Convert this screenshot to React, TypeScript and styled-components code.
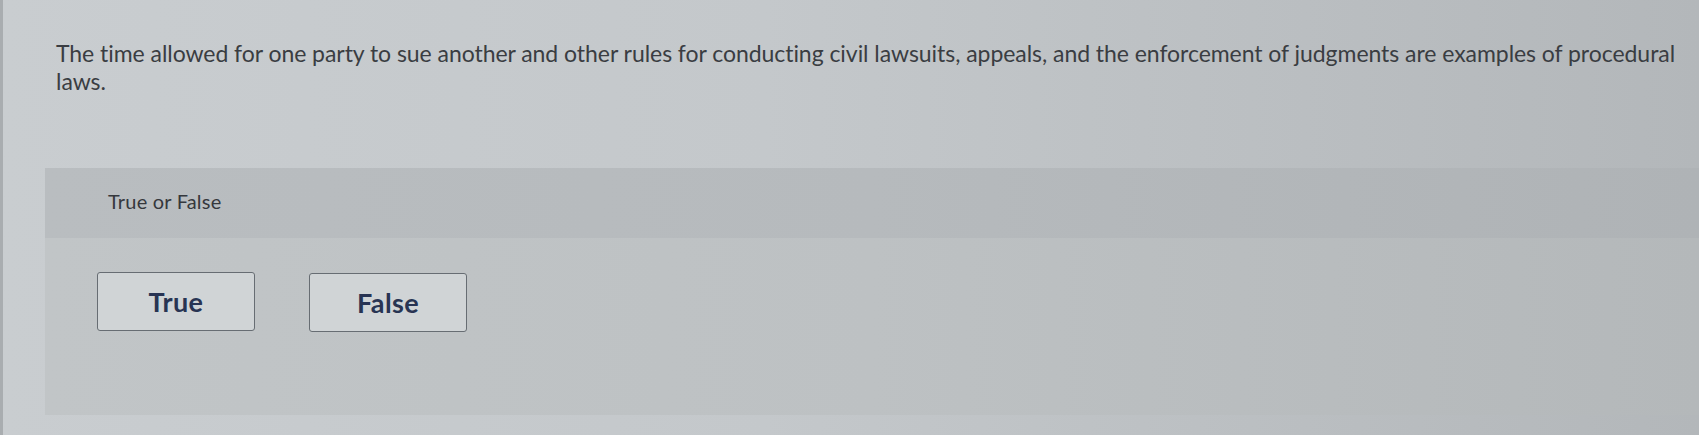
import React from "react";
import styled, { createGlobalStyle } from "styled-components";

const GlobalStyle = createGlobalStyle`
  html, body {
    margin: 0;
    padding: 0;
  }
  body {
    width: 1699px;
    height: 435px;
    overflow: hidden;
    background: linear-gradient(90deg, #c9cdd0 0%, #c4c8cb 45%, #b9bdc0 80%, #b3b7ba 100%);
    font-family: Lato, "Open Sans", sans-serif;
  }
`;

const Page = styled.main`
  position: relative;
  height: 435px;
  padding-top: 39px;
  box-sizing: border-box;
  border-left: 3px solid #a9adb0;
`;

const Prompt = styled.p`
  margin: 0 0 0 53px;
  width: 1640px;
  font-size: 23px;
  line-height: 28px;
  color: #3a3d42;
  letter-spacing: -0.05px;
`;

const Panel = styled.section`
  margin: 73px 0 0 42px;
  height: 247px;
  display: flex;
  flex-direction: column;
  background: linear-gradient(90deg, #c1c5c7 0%, #bdc1c3 50%, #b4b8ba 100%);
`;

const PanelHeader = styled.div`
  height: 70px;
  display: flex;
  align-items: center;
  padding-left: 63px;
  padding-bottom: 4px;
  box-sizing: border-box;
  background: linear-gradient(90deg, #b9bdc0 0%, #b6babd 50%, #afb3b6 100%);
`;

const Label = styled.span`
  font-size: 20px;
  letter-spacing: 0.2px;
  color: #35383d;
`;

const Choices = styled.div`
  display: flex;
  gap: 54px;
  padding: 34px 0 0 52px;
`;

const Choice = styled.button<{ $nudge?: number }>`
  width: 158px;
  height: 59px;
  margin-top: ${(p) => p.$nudge ?? 0}px;
  display: flex;
  align-items: center;
  justify-content: center;
  background: #d0d4d6;
  border: 1.5px solid #676d73;
  border-radius: 3px;
  font-family: Lato, "Open Sans", sans-serif;
  font-weight: 700;
  font-size: 27px;
  letter-spacing: 0.4px;
  color: #283453;
  cursor: pointer;
  padding: 0;
`;

export default function App() {
  return (
    <>
      <GlobalStyle />
      <Page>
        <Prompt>
          The time allowed for one party to sue another and other rules for conducting civil lawsuits,
          appeals, and the enforcement of judgments are examples of procedural laws.
        </Prompt>
        <Panel>
          <PanelHeader>
            <Label>True or False</Label>
          </PanelHeader>
          <Choices>
            <Choice type="button">True</Choice>
            <Choice type="button" $nudge={1}>False</Choice>
          </Choices>
        </Panel>
      </Page>
    </>
  );
}
